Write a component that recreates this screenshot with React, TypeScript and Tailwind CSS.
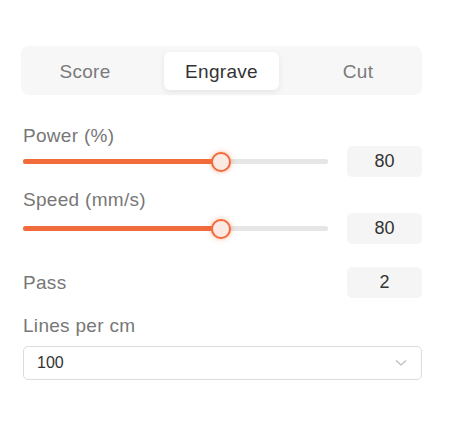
import React from "react";

const font = { fontFamily: '"Liberation Sans", Arial, sans-serif' };

function Slider({ pct }: { pct: number }) {
  return (
    <div className="relative flex-1 h-[20px] flex items-center">
      <div className="w-full h-[5px] rounded-full bg-[#e6e6e6]" />
      <div
        className="absolute left-0 h-[5px] rounded-full bg-[#f26b3a]"
        style={{ width: `${pct}%` }}
      />
      <div
        className="absolute w-[20px] h-[20px] rounded-full border-2 border-[#f26b3a] bg-[#fbeae4] shadow-[0_0_5px_rgba(242,107,58,0.5)]"
        style={{ left: `calc(${pct}% - 10px)` }}
      />
    </div>
  );
}

function NumBox({ v }: { v: string }) {
  return (
    <div className="w-[75px] h-[31px] rounded-[5px] bg-[#f5f5f5] flex items-center justify-center text-[18px] text-[#333]">
      {v}
    </div>
  );
}

export default function App() {
  return (
    <div className="w-[474px] h-[427px] bg-white" style={font}>
      <div className="pl-[21px] pr-[52px] pt-[46px]">
        <div className="h-[49px] rounded-[8px] bg-[#f7f7f7] px-[6px] flex items-center justify-between">
          <div className="w-[116px] h-[38px] pt-[3px] flex items-center justify-center text-[19px] tracking-[0.3px] text-[#7a7a7a]">Score</div>
          <div className="w-[115px] h-[38px] pt-[3px] rounded-[6px] bg-white shadow-[0_2px_6px_rgba(0,0,0,0.08)] flex items-center justify-center text-[19px] tracking-[0.3px] text-[#333]">Engrave</div>
          <div className="w-[116px] h-[38px] pt-[3px] flex items-center justify-center text-[19px] tracking-[0.3px] text-[#7a7a7a]">Cut</div>
        </div>

        <div className="pl-[2px] mt-[30px] text-[19px] tracking-[0.3px] text-[#777] leading-[22px]">Power (%)</div>
        <div className="flex items-center mt-[-1px] pl-[2px]">
          <div className="w-[305px] flex"><Slider pct={65} /></div>
          <div className="ml-auto"><NumBox v="80" /></div>
        </div>

        <div className="pl-[2px] mt-[12px] text-[19px] tracking-[0.3px] text-[#777] leading-[22px]">Speed (mm/s)</div>
        <div className="flex items-center mt-[2px] pl-[2px]">
          <div className="w-[305px] flex"><Slider pct={65} /></div>
          <div className="ml-auto"><NumBox v="80" /></div>
        </div>

        <div className="flex items-center mt-[23px] pl-[2px]">
          <div className="text-[19px] tracking-[0.3px] text-[#777] pt-[2px]">Pass</div>
          <div className="ml-auto"><NumBox v="2" /></div>
        </div>

        <div className="pl-[2px] mt-[17px] text-[19px] tracking-[0.3px] text-[#777] leading-[22px]">Lines per cm</div>
        <div className="ml-[2px] mt-[9px] h-[34px] rounded-[5px] border border-[#dcdcdc] flex items-center pl-[13px] pr-[14px]">
          <span className="text-[16px] text-[#333]">100</span>
          <svg className="ml-auto" width="12" height="8" viewBox="0 0 12 8">
            <path d="M1 1.5 L6 6 L11 1.5" fill="none" stroke="#bbb" strokeWidth="1.2" />
          </svg>
        </div>
      </div>
    </div>
  );
}
